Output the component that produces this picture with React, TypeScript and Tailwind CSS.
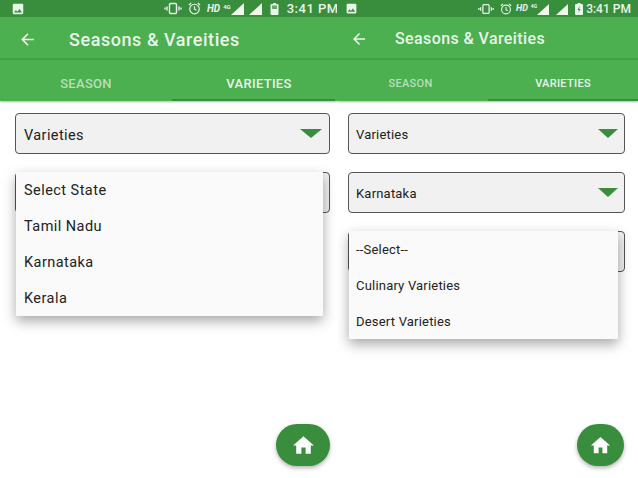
import { MdArrowBack, MdHome, MdImage } from 'react-icons/md';

function StatusBar({ wide }: { wide: boolean }) {
  return (
    <div className="flex h-[17px] items-center bg-[#388e3c] text-[#e8f5e9]">
      <MdImage className={wide ? 'ml-[11px] h-[14px] w-[14px] shrink-0' : 'ml-[8px] h-[13px] w-[13px] shrink-0'} />
      <div className={wide ? 'ml-[139px] flex shrink-0 items-center' : 'ml-[120px] flex shrink-0 items-center'}>
        {/* vibrate */}
        <svg viewBox="0 0 18 12" className={wide ? 'h-[13px] w-[18px]' : 'h-[12px] w-[16px]'} fill="none" stroke="#e8f5e9" strokeWidth="1.4">
          <rect x="5.5" y="1" width="7" height="10" rx="1" />
          <path d="M3 4v4M1 5v2M15 4v4M17 5v2" />
        </svg>
        {/* alarm */}
        <svg viewBox="0 0 12 12" className={wide ? 'ml-[6px] h-[13px] w-[13px]' : 'ml-[6px] h-[12px] w-[12px]'} fill="none" stroke="#e8f5e9" strokeWidth="1.1">
          <circle cx="6" cy="6.5" r="4.4" />
          <path d="M6 4v2.7l1.8 1M.8 2.8 3 1M11.2 2.8 9 1" />
        </svg>
        <span className={wide ? 'ml-[6px] text-[10px] font-bold italic leading-none' : 'ml-[4px] text-[9px] font-bold italic leading-none'}>HD</span>
        <span className={wide ? 'mb-[4px] ml-[3px] text-[6px] font-bold leading-none' : 'mb-[4px] ml-[3px] text-[5px] font-bold leading-none'}>4G</span>
        <svg viewBox="0 0 12 12" className={wide ? 'h-[13px] w-[13px]' : 'h-[12px] w-[12px]'} fill="#f1f8e9">
          <path d="M0 12 12 1v11z" />
        </svg>
        <svg viewBox="0 0 12 12" className={wide ? 'ml-[5px] h-[13px] w-[13px]' : 'ml-[7px] h-[12px] w-[12px]'} fill="#f1f8e9">
          <path d="M0 12 12 1v11z" />
        </svg>
        {/* battery */}
        <svg viewBox="0 0 8 12" className={wide ? 'ml-[8px] h-[12px] w-[9px]' : 'ml-[7px] h-[12px] w-[8px]'} fill="#e8f5e9">
          <path d="M2.5 0h3v1H7a1 1 0 0 1 1 1v9a1 1 0 0 1-1 1H1a1 1 0 0 1-1-1V2a1 1 0 0 1 1-1h1.5z" />
          {wide ? (
            <rect x="1.5" y="2.5" width="5" height="3.5" fill="#66a96a" />
          ) : (
            <path d="M4.6 3 2.6 7h1.3l-.5 2.6L5.6 6H4.2z" fill="#388e3c" />
          )}
        </svg>
        <span className={wide ? 'ml-[8px] whitespace-nowrap text-[13px] font-medium leading-none tracking-[0.5px]' : 'ml-[3px] whitespace-nowrap text-[12px] font-medium leading-none'}>3:41 PM</span>
      </div>
    </div>
  );
}

function Header({ wide }: { wide: boolean }) {
  return (
    <>
      <div className="flex h-[43px] items-center border-b-2 border-[#43a047] bg-[#4caf50] pt-[3px]">
        <MdArrowBack className={wide ? 'ml-[18px] h-[19px] w-[19px] text-[#f1f8e9]' : 'ml-[13px] h-[18px] w-[18px] text-[#f1f8e9]'} />
        <span className={wide ? 'ml-[32px] text-[18px] font-medium tracking-[0.55px] text-[#e8f5e9]' : 'ml-[27px] text-[16px] font-medium tracking-[0.4px] text-[#e8f5e9]'}>Seasons &amp; Vareities</span>
      </div>
      <div className={wide ? 'relative flex h-[41px] items-center bg-[#4caf50] pt-[6px] shadow-[0_1px_2px_rgba(0,0,0,0.3)]' : 'relative flex h-[41px] items-center bg-[#4caf50] pt-[8px] shadow-[0_1px_2px_rgba(0,0,0,0.3)]'}>
        <span className={wide ? 'w-[172px] shrink-0 text-center text-[13px] font-medium tracking-[0.3px] text-[#b9dfba]' : 'w-[147px] shrink-0 text-center text-[11px] font-medium tracking-[0.3px] text-[#b9dfba]'}>SEASON</span>
        <span className={wide ? 'w-[174px] shrink-0 text-center text-[13px] font-medium tracking-[0.3px] text-[#e8f5e9]' : 'ml-[4px] w-[150px] shrink-0 text-center text-[11px] font-medium tracking-[0.3px] text-[#e8f5e9]'}>VARIETIES</span>
        <div className={wide ? 'absolute bottom-0 left-[172px] h-[2px] w-[163px] bg-[#388e3c]' : 'absolute bottom-0 left-[151px] h-[2px] w-[150px] bg-[#388e3c]'} />
      </div>
    </>
  );
}

function Dropdown({ label, wide }: { label: string; wide: boolean }) {
  return (
    <div
      className={
        wide
          ? 'flex h-[41px] w-[315px] items-center justify-between rounded-[4px] border border-[#555] bg-[#f1f1f1] pl-[8px] pr-[7px] pt-[5px] text-[14.5px] tracking-[0.4px] text-[#222]'
          : 'flex h-[41px] w-[277px] items-center justify-between rounded-[4px] border border-[#555] bg-[#f1f1f1] pl-[7px] pr-[6px] pt-[3px] text-[13px] tracking-[0.2px] text-[#222]'
      }
    >
      <span>{label}</span>
      {label && (
        <div
          className={
            wide
              ? 'mb-[5px] h-0 w-0 border-x-[11px] border-t-[9px] border-x-transparent border-t-[#388e3c]'
              : 'mb-[3px] h-0 w-0 border-x-[10px] border-t-[9px] border-x-transparent border-t-[#388e3c]'
          }
        />
      )}
    </div>
  );
}

function Menu({ items, className, wide }: { items: string[]; className: string; wide: boolean }) {
  return (
    <div className={`${className} absolute z-10 bg-[#fafafa] shadow-[0_5px_12px_rgba(0,0,0,0.35)]`}>
      {items.map((item) => (
        <div
          key={item}
          className={
            wide
              ? 'flex h-[36px] items-center pl-[8px] pt-[1px] text-[14.5px] tracking-[0.45px] text-[#222]'
              : 'flex h-[36px] items-center pl-[7px] pt-[1px] text-[13px] tracking-[0.2px] text-[#222]'
          }
        >
          {item}
        </div>
      ))}
    </div>
  );
}

export default function App() {
  return (
    <div className="flex h-[478px] w-[638px] overflow-hidden bg-white font-['Roboto',sans-serif]">
      {/* Left phone */}
      <div className="relative h-full w-[337px] shrink-0 overflow-hidden">
        <StatusBar wide />
        <Header wide />
        <div className="relative flex flex-col gap-[18px] pl-[15px] pt-[12px]">
          <Dropdown label="Varieties" wide />
          <Dropdown label="" wide />
          <Menu wide items={['Select State', 'Tamil Nadu', 'Karnataka', 'Kerala']} className="left-[16px] top-[71px] w-[307px]" />
        </div>
        <button type="button" className="absolute left-[276px] top-[424px] flex h-[42px] w-[54px] items-center justify-center rounded-full bg-[#388e3c] shadow-[0_2px_4px_rgba(0,0,0,0.3)]">
          <MdHome className="h-[25px] w-[25px] text-white" />
        </button>
      </div>

      {/* Right phone */}
      <div className="relative h-full w-[301px] shrink-0 overflow-hidden">
        <StatusBar wide={false} />
        <Header wide={false} />
        <div className="relative flex flex-col gap-[18px] pl-[11px] pt-[12px]">
          <Dropdown label="Varieties" wide={false} />
          <Dropdown label="Karnataka" wide={false} />
          <Dropdown label="" wide={false} />
          <Menu wide={false} items={['--Select--', 'Culinary Varieties', 'Desert Varieties']} className="left-[12px] top-[130px] w-[269px]" />
        </div>
        <button type="button" className="absolute left-[240px] top-[424px] flex h-[42px] w-[47px] items-center justify-center rounded-full bg-[#388e3c] shadow-[0_2px_4px_rgba(0,0,0,0.3)]">
          <MdHome className="h-[23px] w-[23px] text-white" />
        </button>
      </div>
    </div>
  );
}
